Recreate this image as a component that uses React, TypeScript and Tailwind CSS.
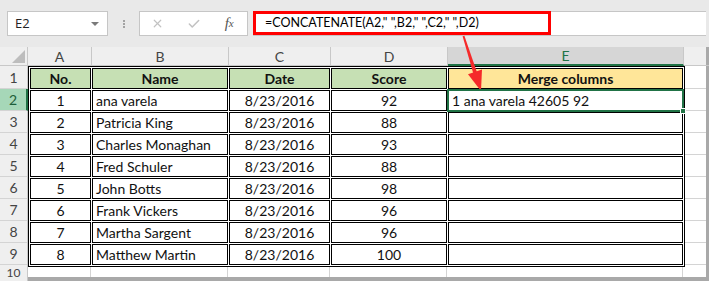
import { X, Check } from 'lucide-react'

const rows = [
  ['1', 'ana varela', '8/23/2016', '92', '1 ana varela 42605 92'],
  ['2', 'Patricia King', '8/23/2016', '88', ''],
  ['3', 'Charles Monaghan', '8/23/2016', '93', ''],
  ['4', 'Fred Schuler', '8/23/2016', '88', ''],
  ['5', 'John Botts', '8/23/2016', '98', ''],
  ['6', 'Frank Vickers', '8/23/2016', '96', ''],
  ['7', 'Martha Sargent', '8/23/2016', '96', ''],
  ['8', 'Matthew Martin', '8/23/2016', '100', ''],
]

const headers = ['No.', 'Name', 'Date', 'Score', 'Merge columns']

export default function App() {
  return (
    <div className="relative w-[709px] h-[281px] overflow-hidden bg-[#e9e9e9] font-['Lato',sans-serif] text-[#111]">
      {/* toolbar strip */}
      <div className="h-[11px]" />

      {/* Formula bar */}
      <div className="flex h-[25px]">
        <div className="ml-[7px] flex w-[101px] items-center justify-between border border-[#c6c6c6] bg-white pl-[7px] pr-[8px] font-['Open_Sans',sans-serif] text-[13px] text-[#222]">
          <span>E2</span>
          <span className="h-0 w-0 border-x-[4px] border-t-[4px] border-x-transparent border-t-[#7a7a7a]" />
        </div>
        <div className="ml-[15px] flex w-[2px] flex-col items-center justify-center gap-[1px]">
          <span className="h-[2px] w-[2px] bg-[#a3a3a3]" />
          <span className="h-[2px] w-[2px] bg-[#a3a3a3]" />
          <span className="h-[2px] w-[2px] bg-[#a3a3a3]" />
        </div>
        <div className="ml-[14px] flex w-[109px] border border-[#c6c6c6] bg-white">
          <div className="flex w-[36px] items-center justify-center text-[#c2c2c2]">
            <X className="h-[13px] w-[13px]" strokeWidth={2.2} />
          </div>
          <div className="flex w-[36px] items-center justify-center text-[#c2c2c2]">
            <Check className="h-[14px] w-[14px]" strokeWidth={2.6} />
          </div>
          <div className="flex w-[36px] items-center justify-center font-['Liberation_Serif',serif] text-[15px] italic text-[#555]">
            f<span className="text-[11px]">x</span>
          </div>
        </div>
        <div className="ml-[5px] flex w-[453px] border-y border-[#c6c6c6] bg-white">
          <div className="-mt-px flex h-[24px] w-[298px] items-center border-[3px] border-[#ff0000] pl-[9px] text-[12.5px] text-black">
            =CONCATENATE(A2," ",B2," ",C2," ",D2)
          </div>
        </div>
      </div>

      <div className="h-[11px]" />

      {/* Column headers */}
      <div className="flex h-[19px] border-b border-[#c8c8c8] bg-[#efefef] text-[14px] text-[#444]">
        <div className="relative w-[28px] border-r border-[#c8c8c8]">
          <svg className="absolute left-0 top-0" width="28" height="18">
            <polygon points="25,3 25,16 12,16" fill="#bdbdbd" />
          </svg>
        </div>
        <div className="flex w-[64px] items-center justify-center border-r border-[#c8c8c8]">A</div>
        <div className="flex w-[137px] items-center justify-center border-r border-[#c8c8c8]">B</div>
        <div className="flex w-[102px] items-center justify-center border-r border-[#c8c8c8]">C</div>
        <div className="flex w-[117px] items-center justify-center border-r border-[#c8c8c8]">D</div>
        <div className="-mb-px flex w-[236px] items-center justify-center border-r border-b-2 border-r-[#c8c8c8] border-b-[#217346] bg-[#d6d6d6] text-[#217346]">
          E
        </div>
        <div className="w-[22px]" />
        <div className="w-[3px] bg-[#a9a9a9]" />
      </div>

      {/* Body */}
      <div className="flex h-[215px]">
        {/* Row headers */}
        <div className="flex w-[28px] flex-col border-r border-[#c8c8c8] bg-[#efefef] text-[14px] text-[#444]">
          <div className="flex h-[23px] shrink-0 items-center justify-center border-b border-[#d4d4d4]">1</div>
          {['2', '3', '4', '5', '6', '7', '8', '9'].map((n) => (
            <div
              key={n}
              className={
                n === '2'
                  ? 'mr-[-1px] flex h-[22px] shrink-0 items-center justify-center border-b border-r-2 border-b-[#d4d4d4] border-r-[#217346] bg-[#a6d7b8] text-[#1d5e39]'
                  : 'flex h-[22px] shrink-0 items-center justify-center border-b border-[#d4d4d4]'
              }
            >
              {n}
            </div>
          ))}
          <div className="flex h-[16px] shrink-0 items-start justify-center pt-[2px] text-[12px] leading-[12px]">10</div>
        </div>

        <div className="flex w-[678px] flex-col">
          <div className="flex h-[201px]">
            {/* Table */}
            <div className="w-[657px] border border-black bg-white p-px">
              <div className="grid grid-cols-[61px_136px_101px_116px_235px] auto-rows-[21px] gap-px text-[14px]">
                {headers.map((h, i) => (
                  <div
                    key={h}
                    className={`flex items-center justify-center border border-black font-bold ${
                      i === 4 ? 'bg-[#ffe699]' : 'bg-[#c6e0b4]'
                    }`}
                  >
                    {h}
                  </div>
                ))}
                {rows.map((r, ri) => (
                  <>
                    <div key={`a${ri}`} className="flex items-center justify-center border border-black">{r[0]}</div>
                    <div key={`b${ri}`} className="flex items-center border border-black pl-[3px]">{r[1]}</div>
                    <div key={`c${ri}`} className="flex items-center justify-center border border-black">{r[2]}</div>
                    <div key={`d${ri}`} className="flex items-center justify-center border border-black">{r[3]}</div>
                    <div key={`e${ri}`} className="relative flex items-center border border-black pl-[3px]">
                      {r[4]}
                      {ri === 0 && (
                        <div className="absolute -inset-[2px] z-10 border-2 border-[#217346]">
                          <div className="absolute -bottom-[4px] -right-[4px] h-[6px] w-[6px] border border-white bg-[#217346]" />
                        </div>
                      )}
                    </div>
                  </>
                ))}
              </div>
            </div>
            {/* Column F */}
            <div className="flex w-[21px] flex-col bg-white">
              <div className="h-[23px] shrink-0 border-b border-[#d4d4d4]" />
              {[0, 1, 2, 3, 4, 5, 6, 7].map((k) => (
                <div key={k} className="h-[22px] shrink-0 border-b border-[#d4d4d4]" />
              ))}
            </div>
          </div>
          {/* Row 10 */}
          <div className="flex h-[10px] bg-white">
            <div className="w-[63px] border-r border-[#d4d4d4]" />
            <div className="w-[137px] border-r border-[#d4d4d4]" />
            <div className="w-[102px] border-r border-[#d4d4d4]" />
            <div className="w-[117px] border-r border-[#d4d4d4]" />
            <div className="w-[236px] border-r border-[#d4d4d4]" />
            <div className="flex-1" />
          </div>
          {/* Horizontal scrollbar edge */}
          <div className="h-[4px] bg-[#a9a9a9]" />
        </div>

        <div className="w-[3px] bg-[#a9a9a9]" />
      </div>

      {/* Red annotation arrow */}
      <svg className="pointer-events-none absolute left-0 top-0" width="709" height="281" viewBox="0 0 709 281">
        <polygon points="462.6,36.3 464.4,35.7 477.4,73.4 473.6,74.6" fill="#f52a2a" />
        <polygon points="481,91 482,69.6 468,74.2" fill="#f52a2a" />
      </svg>
    </div>
  )
}
